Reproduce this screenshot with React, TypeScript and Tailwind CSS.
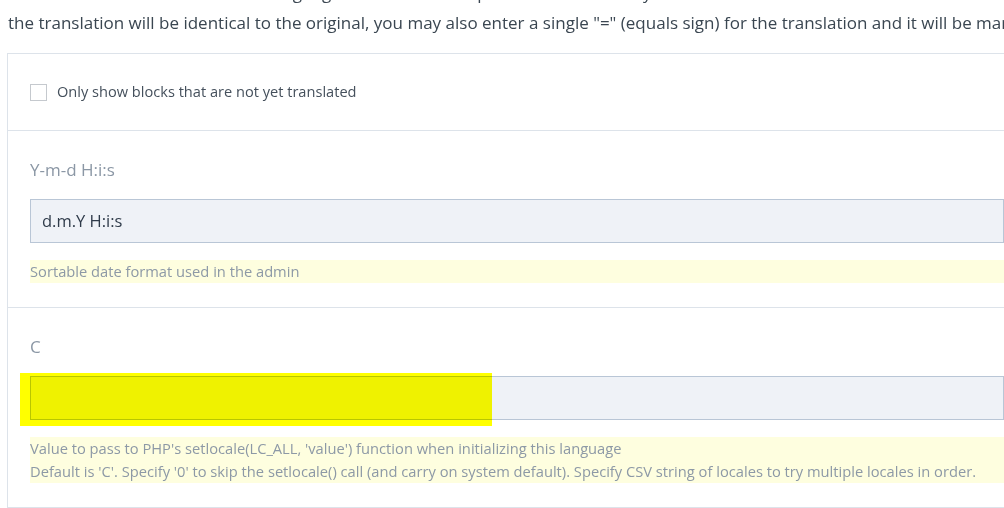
const font = { fontFamily: '"Open Sans", "Noto Sans", sans-serif' }

function Field({
  label,
  value,
  help,
  highlight,
}: {
  label: string
  value: string
  help: string[]
  highlight?: boolean
}) {
  return (
    <div className="px-[22px] pt-[27px] pb-[24px] border-b border-[#dde3ea]">
      <div className="text-[17px] leading-[24px] text-[#8b97a5]">{label}</div>
      <div className="relative mt-[17px]">
        <div className="h-[44px] flex items-center px-[11px] bg-[#eff2f7] border border-[#b9c6d6] text-[16.5px] text-[#2f3b4a]">
          {value}
        </div>
        {highlight && (
          <div className="absolute left-[-10px] top-[-3px] w-[472px] h-[53px] bg-[#ffff00] mix-blend-multiply" />
        )}
      </div>
      <div className="mt-[17px] bg-[#fefedf] text-[14.7px] leading-[23px] text-[#8d99a6]">
        {help.map((line) => (
          <div key={line} className="whitespace-nowrap">
            {line}
          </div>
        ))}
      </div>
    </div>
  )
}

export default function App() {
  return (
    <div className="w-[1004px] h-[508px] overflow-hidden bg-white" style={font}>
      <div className="px-[8px] mt-[-22px] text-[17px] leading-[30px] text-[#3a4651] whitespace-nowrap">
        <div>Blocks that are the same in each language do not need a separate translation. If you know that</div>
        <div>the translation will be identical to the original, you may also enter a single "=" (equals sign) for the translation and it will be marked as translated.</div>
      </div>

      <div className="ml-[7px] mt-[15px] w-[1020px] border border-[#dde3ea]">
        <div className="h-[77px] px-[22px] flex items-center gap-[10px] border-b border-[#dde3ea]">
          <span className="w-[17px] h-[17px] border border-[#c5c9ce] bg-white" />
          <span className="text-[14.6px] text-[#45505c]">Only show blocks that are not yet translated</span>
        </div>

        <Field label="Y-m-d H:i:s" value="d.m.Y H:i:s" help={["Sortable date format used in the admin"]} />

        <Field
          label="C"
          value=""
          highlight
          help={[
            "Value to pass to PHP's setlocale(LC_ALL, 'value') function when initializing this language",
            "Default is 'C'. Specify '0' to skip the setlocale() call (and carry on system default). Specify CSV string of locales to try multiple locales in order.",
          ]}
        />
      </div>
    </div>
  )
}
